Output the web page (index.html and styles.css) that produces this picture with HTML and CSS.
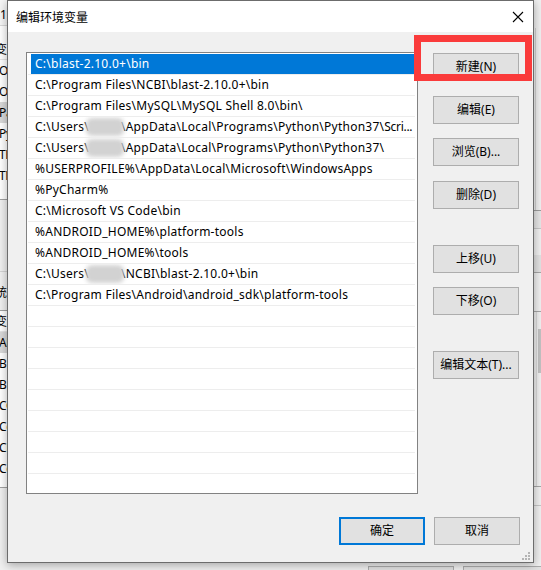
FILE: index.html
```html
<!DOCTYPE html>
<html lang="zh-CN">
<head>
<meta charset="utf-8">
<title>编辑环境变量</title>
<link rel="stylesheet" href="styles.css">
</head>
<body>
<div class="desk">
  <!-- parent "环境变量" window showing around the dialog -->
  <div class="backdrop">
    <div class="bg-left">
      <div class="bl-top">13</div>
      <div class="bl-list">
        <div class="bl-head"><span class="cjk">变量</span></div>
        <div class="bl-row">OneDrive</div>
        <div class="bl-row">OneDriveConsumer</div>
        <div class="bl-row sel">Path</div>
        <div class="bl-row">PyCharm</div>
        <div class="bl-row">TEMP</div>
        <div class="bl-row">TMP</div>
      </div>
      <div class="bl-space"></div>
      <div class="bl-label"><span class="cjk wide">系统变量(S)</span></div>
      <div class="bl-list second">
        <div class="bl-head"><span class="cjk">变量</span></div>
        <div class="bl-row sel">ANDROID_HOME</div>
        <div class="bl-row">BLASTDB</div>
        <div class="bl-row">BLASTMAT</div>
        <div class="bl-row">COMPUTE</div>
        <div class="bl-row">ComSpec</div>
        <div class="bl-row">CLASSPATH</div>
        <div class="bl-row">Conda</div>
      </div>
    </div>
    <div class="bg-mid"></div>
    <div class="bg-right">
      <div class="br-seg br-a"><div class="br-vline"></div></div>
      <div class="br-seg br-b"></div>
      <div class="br-seg br-c"></div>
      <div class="br-seg br-d"></div>
      <div class="br-seg br-e"></div>
      <div class="br-seg br-f"><div class="br-thumb"></div></div>
      <div class="br-seg br-g"></div>
      <div class="br-seg br-h"></div>
    </div>
    <div class="bg-footer">
      <span class="bg-btn"></span>
      <span class="bg-btn"></span>
    </div>
  </div>

  <!-- 编辑环境变量 dialog -->
  <div class="dialog">
    <div class="titlebar">
      <span class="title">编辑环境变量</span>
      <span class="close">
        <svg width="12" height="12" viewBox="0 0 12 12"><path d="M1 1 L11 11 M11 1 L1 11" stroke="#000" stroke-width="1.1" fill="none"/></svg>
      </span>
    </div>
    <div class="body">
      <div class="main">
        <div class="listbox">
          <div class="row selected"><span class="hl">C:\blast-2.10.0+\bin</span></div>
          <div class="row"><span class="hl">C:\Program Files\NCBI\blast-2.10.0+\bin</span></div>
          <div class="row"><span class="hl">C:\Program Files\MySQL\MySQL Shell 8.0\bin\</span></div>
          <div class="row"><span class="hl">C:\Users\<span class="blur"></span>\AppData\Local\Programs\Python\Python37\<span class="tail">Scri...</span></span></div>
          <div class="row"><span class="hl">C:\Users\<span class="blur"></span>\AppData\Local\Programs\Python\Python37\</span></div>
          <div class="row"><span class="hl">%USERPROFILE%\AppData\Local\Microsoft\WindowsApps</span></div>
          <div class="row"><span class="hl">%PyCharm%</span></div>
          <div class="row"><span class="hl">C:\Microsoft VS Code\bin</span></div>
          <div class="row"><span class="hl">%ANDROID_HOME%\platform-tools</span></div>
          <div class="row"><span class="hl">%ANDROID_HOME%\tools</span></div>
          <div class="row"><span class="hl">C:\Users\<span class="blur"></span>\NCBI\blast-2.10.0+\bin</span></div>
          <div class="row"><span class="hl">C:\Program Files\Android\android_sdk\platform-tools</span></div>
          <div class="row"></div>
          <div class="row"></div>
          <div class="row"></div>
          <div class="row"></div>
          <div class="row"></div>
          <div class="row"></div>
          <div class="row"></div>
          <div class="row"></div>
          <div class="row"></div>
        </div>
        <div class="actions">
          <button class="btn">新建(N)</button>
          <button class="btn">编辑(E)</button>
          <button class="btn">浏览(B)...</button>
          <button class="btn">删除(D)</button>
          <button class="btn group">上移(U)</button>
          <button class="btn">下移(O)</button>
          <button class="btn group">编辑文本(T)...</button>
        </div>
      </div>
      <div class="footer">
        <button class="btn default">确定</button>
        <button class="btn">取消</button>
      </div>
    </div>
    <svg class="grip" width="8" height="8" viewBox="0 0 8 8">
      <rect x="6" y="0" width="2" height="2" fill="#b4b4b4"/>
      <rect x="3" y="3" width="2" height="2" fill="#b4b4b4"/>
      <rect x="6" y="3" width="2" height="2" fill="#b4b4b4"/>
      <rect x="0" y="6" width="2" height="2" fill="#b4b4b4"/>
      <rect x="3" y="6" width="2" height="2" fill="#b4b4b4"/>
      <rect x="6" y="6" width="2" height="2" fill="#b4b4b4"/>
    </svg>
  </div>

  <!-- highlight frame around the 新建 button -->
  <div class="mark"></div>
</div>
</body>
</html>
```

FILE: styles.css
```css
* { box-sizing: border-box; }

html, body {
  margin: 0;
  padding: 0;
  width: 541px;
  height: 570px;
  overflow: hidden;
  background: #ececec;
  font-family: "Noto Sans", "Noto Sans CJK SC", sans-serif;
  font-size: 12px;
  color: #000;
}

.desk {
  position: relative;
  width: 541px;
  height: 570px;
}

/* ---------- parent window behind ---------- */
.backdrop {
  display: grid;
  grid-template-columns: 40px 1fr 8px;
  grid-template-rows: 566px 4px;
  width: 541px;
  height: 570px;
  background: #f0f0f0;
}

.bg-left {
  grid-column: 1;
  grid-row: 1;
  display: flex;
  flex-direction: column;
  overflow: hidden;
  white-space: nowrap;
}

.bl-top {
  height: 26px;
  line-height: 30px;
  background: #f6f6f6;
  border-bottom: 1px solid #d9d9d9;
}

.bl-list {
  background: #fff;
  border-bottom: 1px solid #a0a0a0;
  padding-top: 13px;
  height: 174px;
}

.bl-list.second {
  border-top: 1px solid #a0a0a0;
  padding-top: 0;
  height: 178px;
}

.bl-head {
  height: 21px;
  line-height: 21px;
  border-bottom: 1px solid #e5e5e5;
}

.bl-row {
  height: 21px;
  line-height: 21px;
  text-indent: -1px;
  letter-spacing: -0.3px;
}

.bl-row.sel { background: #d9d9d9; }

.cjk {
  display: inline-block;
  margin-left: -5px;
}

.cjk.wide { margin-left: -17px; }

.bl-space {
  height: 72px;
  border-bottom: 1px solid #d4d4d4;
}

.bl-label {
  height: 38px;
  line-height: 42px;
}

.bg-mid {
  grid-column: 2;
  grid-row: 1;
}

.bg-right {
  grid-column: 3;
  grid-row: 1;
  display: flex;
  flex-direction: column;
  background: #f0f0f0;
}

.br-seg { flex: none; }
.br-a { height: 210px; padding-top: 28px; }
.br-vline { height: 100%; margin-left: 2px; border-left: 1px solid #d2d2d2; }
.br-b { height: 18px; border-top: 1px solid #9c9c9c; background: #e6e6e6; }
.br-c { height: 27px; border-top: 1px solid #c6c6c6; }
.br-d { height: 18px; background: #e2e2e2; border-bottom: 1px solid #a6a6a6; }
.br-e { height: 39px; border-bottom: 1px solid #a6a6a6; }
.br-f {
  height: 174px;
  margin-left: 3px;
  border-left: 1px solid #dadada;
  padding-top: 17px;
}
.br-thumb { height: 44px; margin-left: 1px; background: #c2c2c2; }
.br-g { height: 19px; border-top: 1px solid #a6a6a6; }
.br-h { flex: 1; border-top: 1px solid #c6c6c6; }

.bg-footer {
  grid-column: 1 / 4;
  grid-row: 2;
  display: flex;
  gap: 9px;
  padding-left: 368px;
  overflow: hidden;
}

.bg-btn {
  flex: none;
  width: 86px;
  height: 8px;
  background: #e1e1e1;
  border: 1px solid #adadad;
}

/* ---------- dialog ---------- */
.dialog {
  position: absolute;
  left: 7px;
  top: 0;
  width: 527px;
  height: 563px;
  border: 1px solid #6c6c6c;
  background: #f0f0f0;
  box-shadow: 0 2px 9px rgba(0, 0, 0, 0.32);
  display: flex;
  flex-direction: column;
}

.titlebar {
  height: 31px;
  flex: none;
  background: #fff;
  display: flex;
  align-items: center;
  justify-content: space-between;
  padding: 0 9px 0 8px;
}

.title {
  font-family: "Noto Sans CJK SC", sans-serif;
  font-size: 12px;
  line-height: 16px;
  margin-top: 1px;
}

.close {
  display: flex;
  width: 12px;
  height: 12px;
}

.body {
  flex: 1;
  display: flex;
  flex-direction: column;
  padding: 20px 13px 0 18px;
}

.main {
  display: flex;
  align-items: flex-start;
}

.listbox {
  width: 392px;
  height: 442px;
  border: 1px solid #828282;
  background: #fff;
  padding-top: 1px;
  overflow: hidden;
  flex: none;
  letter-spacing: 0.25px;
}

.row {
  height: 21px;
  margin: 0 2px 0 1px;
  border-bottom: 1px solid #ededed;
  display: flex;
  white-space: nowrap;
}

.hl {
  display: block;
  flex: 1;
  margin: 0 0 0 3px;
  padding-left: 4px;
  line-height: 20px;
  overflow: hidden;
}

.selected .hl {
  background: #0078d7;
  color: #fff;
}

.tail { letter-spacing: -0.3px; }

.blur {
  display: inline-block;
  width: 38px;
  height: 18px;
  margin: 0 -3px 0 -3px;
  vertical-align: -5px;
  background: #d2d2d2;
  border-radius: 6px;
  filter: blur(2px);
}

.actions {
  display: flex;
  flex-direction: column;
  gap: 14.5px;
  margin-left: 15px;
  padding-top: 1px;
}

.btn {
  width: 86px;
  height: 28px;
  padding: 0;
  background: #e1e1e1;
  border: 1px solid #adadad;
  font-family: "Noto Sans", "Noto Sans CJK SC", sans-serif;
  font-size: 12px;
  color: #000;
  line-height: 16px;
}

.btn.group { margin-top: 21.5px; }

.btn.default { border: 2px solid #0078d7; }

.footer {
  display: flex;
  justify-content: flex-end;
  gap: 9px;
  margin-top: 23px;
}

.grip {
  position: absolute;
  right: 3px;
  bottom: 2px;
}

/* red frame drawn over the dialog */
.mark {
  position: absolute;
  left: 414px;
  top: 35px;
  width: 118px;
  height: 46px;
  border: 7px solid #fa3b3b;
}
```
